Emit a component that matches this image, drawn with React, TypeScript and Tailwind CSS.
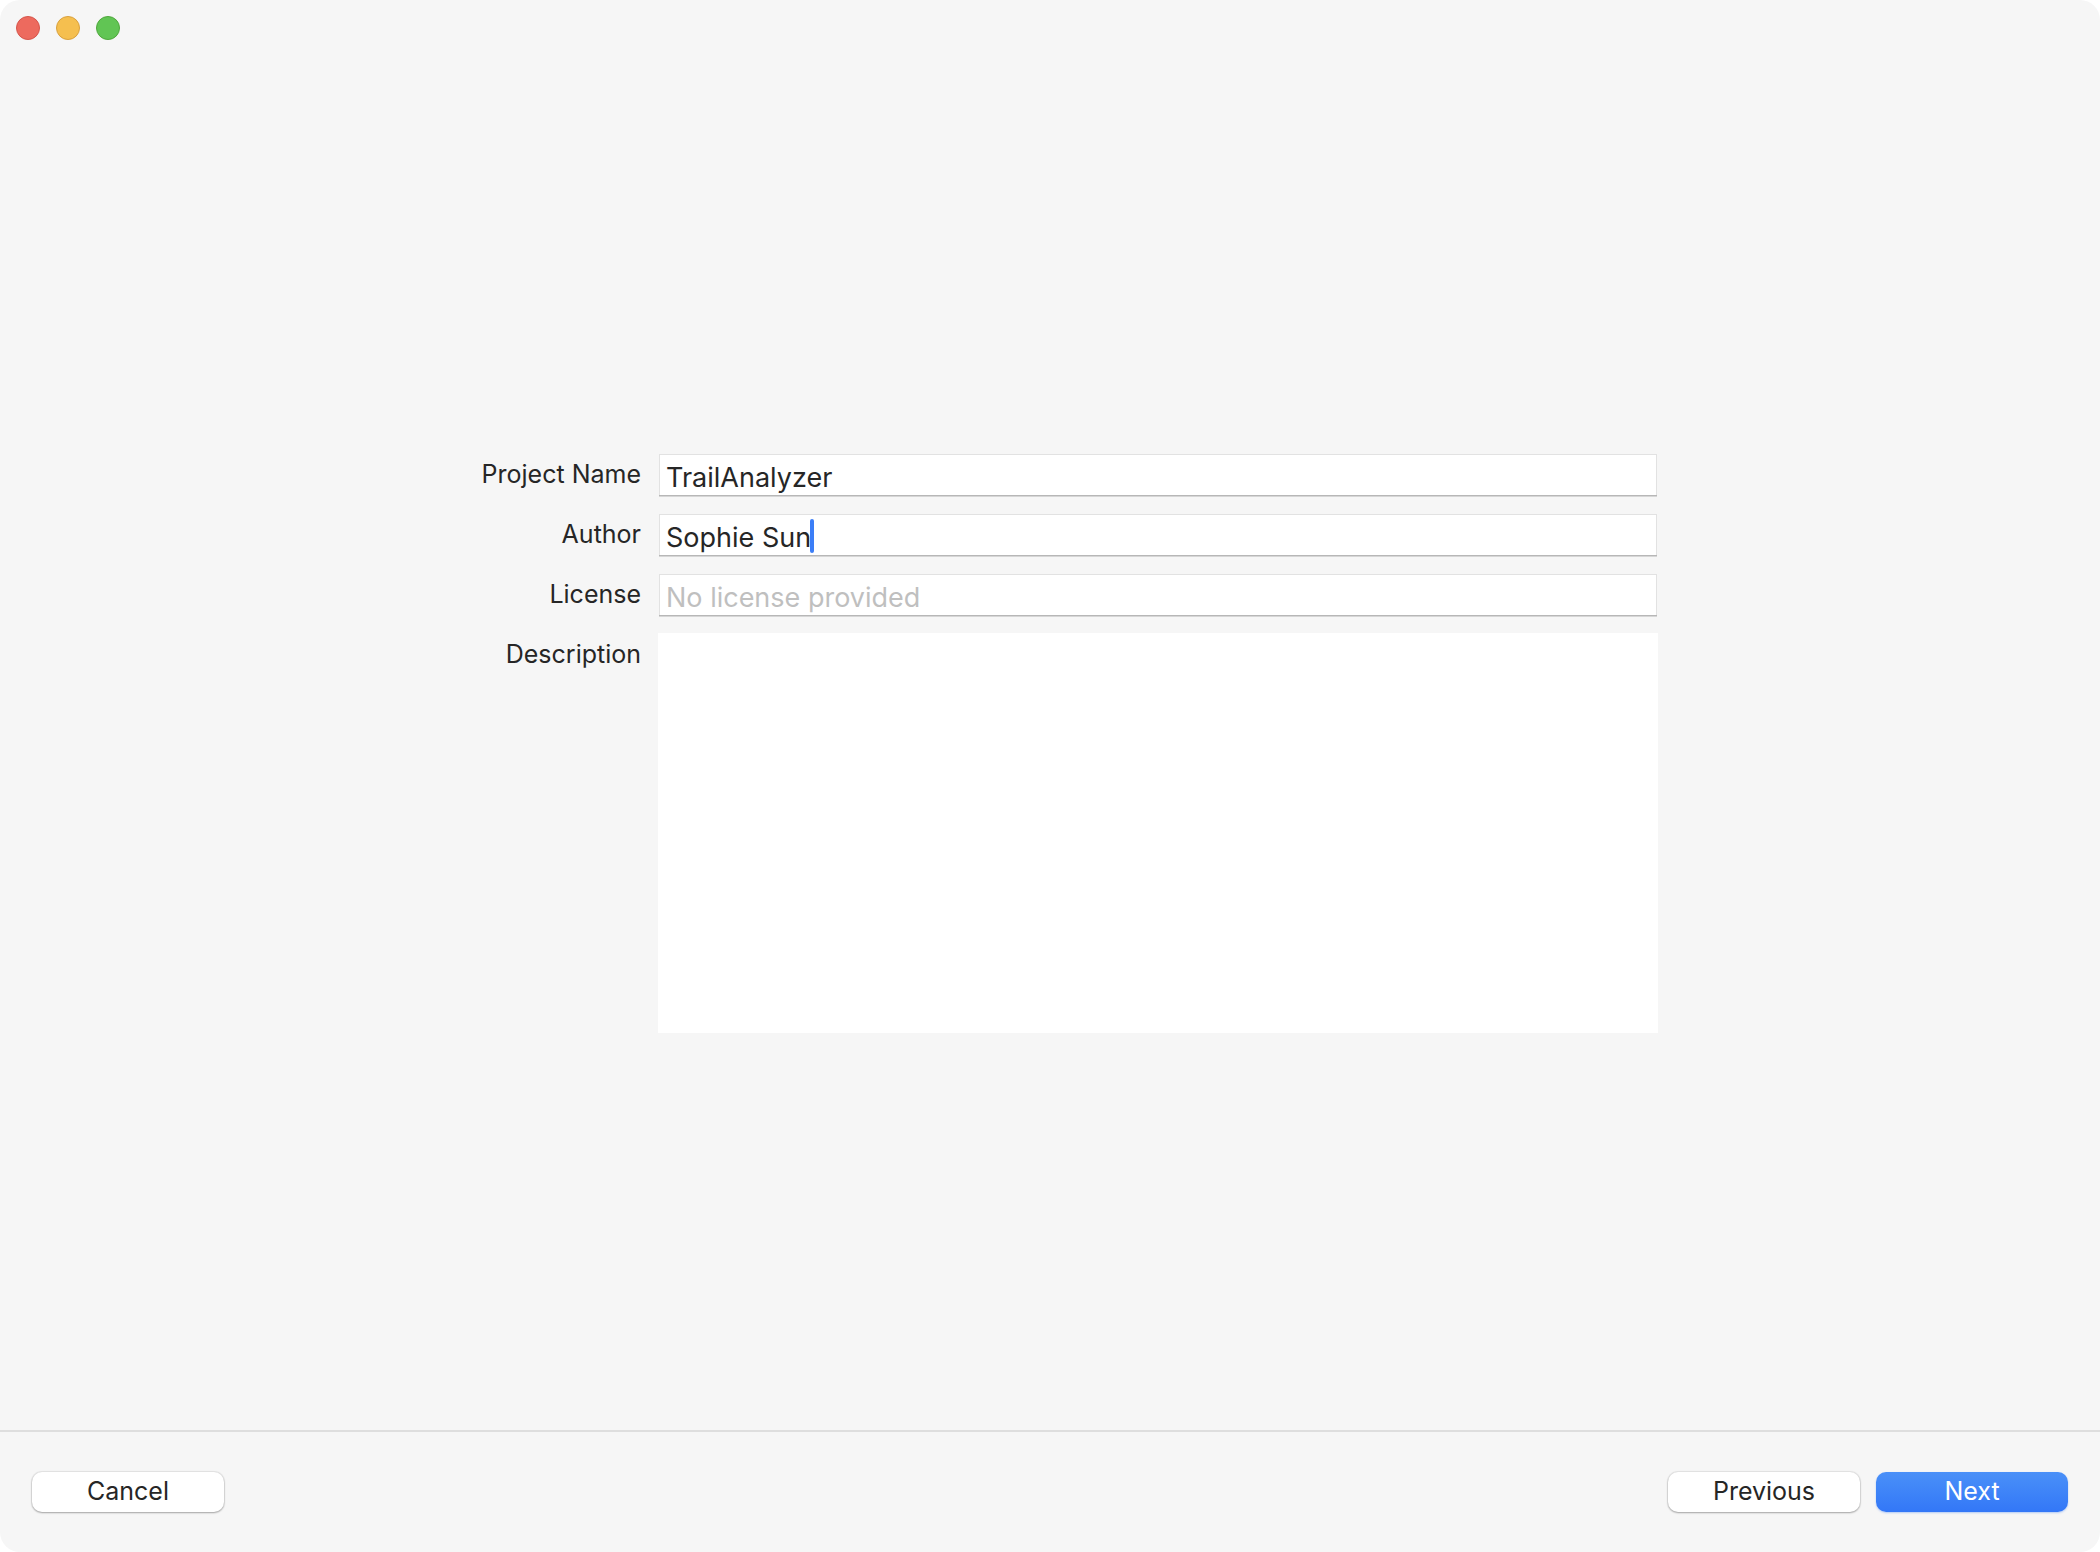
import type { ReactNode } from "react";

const fieldClass =
  "block h-[41px] w-full border border-b-0 border-[#e2e2e2] bg-white px-[6px] pt-1 text-[27px] leading-9 text-[#262626] caret-transparent shadow-[0_1px_0_#b7b7b7,0_2px_0_#d6d6d6] outline-none placeholder:text-[#bfbfbf] placeholder:opacity-100";

function Row({ id, label, children }: { id: string; label: string; children: ReactNode }) {
  return (
    <div className="flex gap-4">
      <label htmlFor={id} className="w-[200px] shrink-0 pr-px text-right text-[25px] leading-[42px]">
        {label}
      </label>
      {children}
    </div>
  );
}

function Field({
  id,
  label,
  value,
  placeholder,
  caret,
}: {
  id: string;
  label: string;
  value?: string;
  placeholder?: string;
  caret?: boolean;
}) {
  return (
    <Row id={id} label={label}>
      <div className="relative h-11 min-w-0 flex-1 px-px pt-px">
        <input id={id} type="text" defaultValue={value} placeholder={placeholder} className={fieldClass} />
        {caret && (
          <span className="absolute top-[6px] left-[152px] h-[34px] w-1 rounded-full bg-[#3b7ef7]" />
        )}
      </div>
    </Row>
  );
}

const plainButton =
  "h-10 w-48 rounded-[10px] bg-white pb-[2px] text-[25px] leading-9 shadow-[0_0_1px_1px_rgba(0,0,0,0.08),0_1px_2px_rgba(0,0,0,0.28)]";

export default function App() {
  return (
    <div className="min-h-screen bg-white font-['Inter',sans-serif] text-[#262626]">
      <div className="flex min-h-screen flex-col overflow-hidden rounded-[20px] bg-[#f6f6f6]">
        <header className="flex h-14 items-center gap-4 px-4">
          <button aria-label="Close" className="size-6 rounded-full border border-[#d5554b] bg-[#ed6a5e]" />
          <button aria-label="Minimize" className="size-6 rounded-full border border-[#d8a03e] bg-[#f5bf4f]" />
          <button aria-label="Zoom" className="size-6 rounded-full border border-[#4fa73c] bg-[#61c554]" />
        </header>

        <main className="flex flex-1 items-center justify-center">
          <form className="flex w-full max-w-[1216px] flex-col gap-4">
            <Field id="name" label="Project Name" value="TrailAnalyzer" />
            <Field id="author" label="Author" value="Sophie Sun" caret />
            <Field id="license" label="License" placeholder="No license provided" />
            <Row id="description" label="Description">
              <textarea
                id="description"
                className="block h-[400px] min-w-0 flex-1 resize-none bg-white px-2 py-1 text-[27px] outline-none"
              />
            </Row>
          </form>
        </main>

        <footer className="flex items-center justify-between border-t-2 border-[#dedede] px-8 py-10">
          <button className={plainButton}>Cancel</button>
          <div className="flex gap-4">
            <button className={plainButton}>Previous</button>
            <button className="h-10 w-48 rounded-[10px] bg-linear-to-b from-[#4a90f8] to-[#3377f7] pb-[2px] text-[25px] leading-9 text-white shadow-[0_1px_2px_rgba(51,119,247,0.35)]">
              Next
            </button>
          </div>
        </footer>
      </div>
    </div>
  );
}
